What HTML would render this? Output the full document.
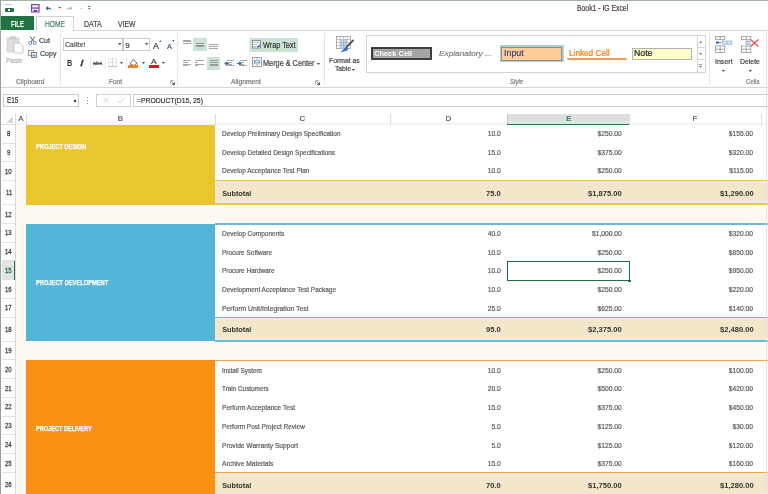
<!DOCTYPE html><html><head><meta charset="utf-8"><style>
html,body{margin:0;padding:0;}
body{width:768px;height:494px;overflow:hidden;position:relative;background:#fff;will-change:transform;font-family:"Liberation Sans", sans-serif;}
.t{position:absolute;white-space:nowrap;line-height:1;-webkit-text-stroke:0.2px currentColor;}
svg{position:absolute;}

</style></head><body>
<div style="position:absolute;left:0px;top:107px;width:768px;height:387px;background:#FEF9F3;"></div>
<div style="position:absolute;left:0px;top:112.5px;width:768px;height:12px;background:#fff;"></div>
<div style="position:absolute;left:0px;top:112.5px;width:15.5px;height:382px;background:#fff;"></div>
<div style="position:absolute;left:507px;top:113.5px;width:122px;height:7.5px;background:#DEDEDE;"></div>
<div style="position:absolute;left:507px;top:121px;width:122px;height:2.8px;background:#E8E4E4;"></div>
<div style="position:absolute;left:507px;top:113.5px;width:1.3px;height:10.5px;background:#C8C8C8;"></div>
<div style="position:absolute;left:507px;top:123.8px;width:122px;height:1.4px;background:#217346;"></div>
<div style="position:absolute;left:15.5px;top:120.5px;width:752.5px;height:4px;background:linear-gradient(#fff,#F1F1F1);"></div>
<div style="position:absolute;left:507px;top:113.5px;width:122px;height:7.5px;background:#DEDEDE;"></div>
<div style="position:absolute;left:507px;top:121px;width:122px;height:2.8px;background:#E8E4E4;"></div>
<div style="position:absolute;left:507px;top:113.5px;width:1.3px;height:10.5px;background:#C8C8C8;"></div>
<div style="position:absolute;left:507px;top:123.8px;width:122px;height:1.4px;background:#217346;"></div>
<div style="position:absolute;left:15.0px;top:114px;width:1px;height:10.5px;background:#DCDCDC;"></div>
<div style="position:absolute;left:25.5px;top:114px;width:1px;height:10.5px;background:#DCDCDC;"></div>
<div style="position:absolute;left:214.5px;top:114px;width:1px;height:10.5px;background:#DCDCDC;"></div>
<div style="position:absolute;left:389.5px;top:114px;width:1px;height:10.5px;background:#DCDCDC;"></div>
<div style="position:absolute;left:628.5px;top:114px;width:1px;height:10.5px;background:#DCDCDC;"></div>
<div style="position:absolute;left:760.5px;top:114px;width:1px;height:10.5px;background:#DCDCDC;"></div>
<div class="t" style="left:18.14px;top:115px;font-size:7.85px;color:#555;">A</div>
<div class="t" style="left:117.64px;top:115px;font-size:7.85px;color:#555;">B</div>
<div class="t" style="left:299.4px;top:115px;font-size:7.85px;color:#555;">C</div>
<div class="t" style="left:445.4px;top:115px;font-size:7.85px;color:#555;">D</div>
<div class="t" style="left:566.14px;top:115px;font-size:7.85px;color:#217346;">E</div>
<div class="t" style="left:692.38px;top:115px;font-size:7.85px;color:#555;">F</div>
<svg style="position:absolute;left:4px;top:115px;overflow:visible" width="10" height="9" viewBox="0 0 10 9"><path d="M9 1 L9 8 L2 8 Z" fill="#DADADA"/></svg>
<div style="position:absolute;left:1.5px;top:142.55px;width:14px;height:0.7px;background:#E2E2E2;"></div>
<div class="t" style="left:7.12px;top:130px;font-size:7.56px;color:#444;transform:scaleX(0.800);transform-origin:0 0;-webkit-text-stroke:0.3px currentColor;">8</div>
<div style="position:absolute;left:1.5px;top:161.3px;width:14px;height:0.7px;background:#E2E2E2;"></div>
<div class="t" style="left:7.12px;top:149px;font-size:7.56px;color:#444;transform:scaleX(0.800);transform-origin:0 0;-webkit-text-stroke:0.3px currentColor;">9</div>
<div style="position:absolute;left:1.5px;top:180.05px;width:14px;height:0.7px;background:#E2E2E2;"></div>
<div class="t" style="left:5.44px;top:168px;font-size:7.56px;color:#444;transform:scaleX(0.800);transform-origin:0 0;-webkit-text-stroke:0.3px currentColor;">10</div>
<div style="position:absolute;left:1.5px;top:204.05px;width:14px;height:0.7px;background:#E2E2E2;"></div>
<div class="t" style="left:5.66px;top:189px;font-size:7.56px;color:#444;transform:scaleX(0.800);transform-origin:0 0;-webkit-text-stroke:0.3px currentColor;">11</div>
<div style="position:absolute;left:1.5px;top:222.8px;width:14px;height:0.7px;background:#E2E2E2;"></div>
<div class="t" style="left:5.44px;top:211px;font-size:7.56px;color:#444;transform:scaleX(0.800);transform-origin:0 0;-webkit-text-stroke:0.3px currentColor;">12</div>
<div style="position:absolute;left:1.5px;top:241.55px;width:14px;height:0.7px;background:#E2E2E2;"></div>
<div class="t" style="left:5.44px;top:229px;font-size:7.56px;color:#444;transform:scaleX(0.800);transform-origin:0 0;-webkit-text-stroke:0.3px currentColor;">13</div>
<div style="position:absolute;left:1.5px;top:260.3px;width:14px;height:0.7px;background:#E2E2E2;"></div>
<div class="t" style="left:5.44px;top:248px;font-size:7.56px;color:#444;transform:scaleX(0.800);transform-origin:0 0;-webkit-text-stroke:0.3px currentColor;">14</div>
<div style="position:absolute;left:1.5px;top:279.05px;width:14px;height:0.7px;background:#E2E2E2;"></div>
<div style="position:absolute;left:1.5px;top:261.0px;width:13px;height:18.05px;background:#E4E4E4;"></div>
<div style="position:absolute;left:14.2px;top:261.0px;width:1.6px;height:18.75px;background:#217346;"></div>
<div class="t" style="left:5.44px;top:267px;font-size:7.56px;color:#217346;transform:scaleX(0.800);transform-origin:0 0;-webkit-text-stroke:0.3px currentColor;">15</div>
<div style="position:absolute;left:1.5px;top:297.8px;width:14px;height:0.7px;background:#E2E2E2;"></div>
<div class="t" style="left:5.44px;top:286px;font-size:7.56px;color:#444;transform:scaleX(0.800);transform-origin:0 0;-webkit-text-stroke:0.3px currentColor;">16</div>
<div style="position:absolute;left:1.5px;top:316.55px;width:14px;height:0.7px;background:#E2E2E2;"></div>
<div class="t" style="left:5.44px;top:304px;font-size:7.56px;color:#444;transform:scaleX(0.800);transform-origin:0 0;-webkit-text-stroke:0.3px currentColor;">17</div>
<div style="position:absolute;left:1.5px;top:340.55px;width:14px;height:0.7px;background:#E2E2E2;"></div>
<div class="t" style="left:5.44px;top:326px;font-size:7.56px;color:#444;transform:scaleX(0.800);transform-origin:0 0;-webkit-text-stroke:0.3px currentColor;">18</div>
<div style="position:absolute;left:1.5px;top:359.3px;width:14px;height:0.7px;background:#E2E2E2;"></div>
<div class="t" style="left:5.44px;top:347px;font-size:7.56px;color:#444;transform:scaleX(0.800);transform-origin:0 0;-webkit-text-stroke:0.3px currentColor;">19</div>
<div style="position:absolute;left:1.5px;top:378.05px;width:14px;height:0.7px;background:#E2E2E2;"></div>
<div class="t" style="left:5.44px;top:366px;font-size:7.56px;color:#444;transform:scaleX(0.800);transform-origin:0 0;-webkit-text-stroke:0.3px currentColor;">20</div>
<div style="position:absolute;left:1.5px;top:396.8px;width:14px;height:0.7px;background:#E2E2E2;"></div>
<div class="t" style="left:5.44px;top:385px;font-size:7.56px;color:#444;transform:scaleX(0.800);transform-origin:0 0;-webkit-text-stroke:0.3px currentColor;">21</div>
<div style="position:absolute;left:1.5px;top:415.55px;width:14px;height:0.7px;background:#E2E2E2;"></div>
<div class="t" style="left:5.44px;top:403px;font-size:7.56px;color:#444;transform:scaleX(0.800);transform-origin:0 0;-webkit-text-stroke:0.3px currentColor;">22</div>
<div style="position:absolute;left:1.5px;top:434.3px;width:14px;height:0.7px;background:#E2E2E2;"></div>
<div class="t" style="left:5.44px;top:422px;font-size:7.56px;color:#444;transform:scaleX(0.800);transform-origin:0 0;-webkit-text-stroke:0.3px currentColor;">23</div>
<div style="position:absolute;left:1.5px;top:453.05px;width:14px;height:0.7px;background:#E2E2E2;"></div>
<div class="t" style="left:5.44px;top:441px;font-size:7.56px;color:#444;transform:scaleX(0.800);transform-origin:0 0;-webkit-text-stroke:0.3px currentColor;">24</div>
<div style="position:absolute;left:1.5px;top:471.8px;width:14px;height:0.7px;background:#E2E2E2;"></div>
<div class="t" style="left:5.44px;top:460px;font-size:7.56px;color:#444;transform:scaleX(0.800);transform-origin:0 0;-webkit-text-stroke:0.3px currentColor;">25</div>
<div style="position:absolute;left:1.5px;top:495.8px;width:14px;height:0.7px;background:#E2E2E2;"></div>
<div class="t" style="left:5.44px;top:481px;font-size:7.56px;color:#444;transform:scaleX(0.800);transform-origin:0 0;-webkit-text-stroke:0.3px currentColor;">26</div>
<div style="position:absolute;left:15.1px;top:112.5px;width:0.7px;height:382px;background:#DADADA;"></div>
<div style="position:absolute;left:1.5px;top:124px;width:14px;height:0.7px;background:#DDDDDD;"></div>
<div style="position:absolute;left:26px;top:124.5px;width:189px;height:80.25px;background:#E8C72E;"></div>
<div class="t" style="left:35.5px;top:143px;font-size:6.98px;color:#fff;font-weight:bold;-webkit-text-stroke:0;transform:scaleX(0.817);transform-origin:0 0;-webkit-text-stroke:0.25px #fff;">PROJECT DESIGN</div>
<div style="position:absolute;left:215px;top:124.5px;width:553px;height:18.75px;background:#fff;"></div>
<div style="position:absolute;left:215px;top:143.25px;width:553px;height:18.75px;background:#fff;"></div>
<div style="position:absolute;left:215px;top:162.0px;width:553px;height:18.75px;background:#fff;"></div>
<div style="position:absolute;left:215px;top:180.75px;width:553px;height:24px;background:#F2E7C9;"></div>
<div style="position:absolute;left:215px;top:180.05px;width:553px;height:1.4px;background:#E9C544;"></div>
<div style="position:absolute;left:215px;top:181.45px;width:553px;height:1.6px;background:#F7E9DA;"></div>
<div style="position:absolute;left:215px;top:203.25px;width:553px;height:1.9px;background:#E9C544;"></div>
<div style="position:absolute;left:215px;top:201.45px;width:553px;height:1.8px;background:#EFEBDD;"></div>
<div style="position:absolute;left:26px;top:223.5px;width:189px;height:117.75px;background:#54B5D7;"></div>
<div class="t" style="left:35.5px;top:279px;font-size:6.98px;color:#fff;font-weight:bold;-webkit-text-stroke:0;transform:scaleX(0.822);transform-origin:0 0;-webkit-text-stroke:0.25px #fff;">PROJECT DEVELOPMENT</div>
<div style="position:absolute;left:215px;top:223.5px;width:553px;height:18.75px;background:#fff;"></div>
<div style="position:absolute;left:215px;top:242.25px;width:553px;height:18.75px;background:#fff;"></div>
<div style="position:absolute;left:215px;top:261.0px;width:553px;height:18.75px;background:#fff;"></div>
<div style="position:absolute;left:215px;top:279.75px;width:553px;height:18.75px;background:#fff;"></div>
<div style="position:absolute;left:215px;top:298.5px;width:553px;height:18.75px;background:#fff;"></div>
<div style="position:absolute;left:215px;top:317.25px;width:553px;height:24px;background:#F2E7C9;"></div>
<div style="position:absolute;left:215px;top:223.4px;width:553px;height:1.5px;background:#64BDDB;"></div>
<div style="position:absolute;left:215px;top:316.55px;width:553px;height:1.4px;background:#64BDDB;"></div>
<div style="position:absolute;left:215px;top:317.95px;width:553px;height:1.6px;background:#F7E9DA;"></div>
<div style="position:absolute;left:215px;top:339.75px;width:553px;height:1.9px;background:#64BDDB;"></div>
<div style="position:absolute;left:215px;top:337.95px;width:553px;height:1.8px;background:#EFEBDD;"></div>
<div style="position:absolute;left:26px;top:360.0px;width:189px;height:136.5px;background:#F99115;"></div>
<div class="t" style="left:35.5px;top:425px;font-size:6.98px;color:#fff;font-weight:bold;-webkit-text-stroke:0;transform:scaleX(0.801);transform-origin:0 0;-webkit-text-stroke:0.25px #fff;">PROJECT DELIVERY</div>
<div style="position:absolute;left:215px;top:360.0px;width:553px;height:18.75px;background:#fff;"></div>
<div style="position:absolute;left:215px;top:378.75px;width:553px;height:18.75px;background:#fff;"></div>
<div style="position:absolute;left:215px;top:397.5px;width:553px;height:18.75px;background:#fff;"></div>
<div style="position:absolute;left:215px;top:416.25px;width:553px;height:18.75px;background:#fff;"></div>
<div style="position:absolute;left:215px;top:435.0px;width:553px;height:18.75px;background:#fff;"></div>
<div style="position:absolute;left:215px;top:453.75px;width:553px;height:18.75px;background:#fff;"></div>
<div style="position:absolute;left:215px;top:472.5px;width:553px;height:24px;background:#F2E7C9;"></div>
<div style="position:absolute;left:215px;top:359.9px;width:553px;height:1.5px;background:#F7A347;"></div>
<div style="position:absolute;left:215px;top:471.8px;width:553px;height:1.4px;background:#F7A347;"></div>
<div style="position:absolute;left:215px;top:473.2px;width:553px;height:1.6px;background:#F7E9DA;"></div>
<div style="position:absolute;left:215px;top:495.0px;width:553px;height:1.9px;background:#F7A347;"></div>
<div style="position:absolute;left:215px;top:493.2px;width:553px;height:1.8px;background:#EFEBDD;"></div>
<div class="t" style="left:222.1px;top:131px;font-size:6.69px;color:#5C5C5C;transform:scaleX(0.969);transform-origin:0 0;">Develop Preliminary Design Specification</div>
<div class="t" style="left:487.68px;top:131px;font-size:6.69px;color:#5C5C5C;">10.0</div>
<div class="t" style="left:597.52px;top:131px;font-size:6.69px;color:#5C5C5C;">$250.00</div>
<div class="t" style="left:728.82px;top:131px;font-size:6.69px;color:#5C5C5C;">$155.00</div>
<div class="t" style="left:222.1px;top:150px;font-size:6.69px;color:#5C5C5C;transform:scaleX(0.969);transform-origin:0 0;">Develop Detailed Design Specifications</div>
<div class="t" style="left:487.68px;top:150px;font-size:6.69px;color:#5C5C5C;">15.0</div>
<div class="t" style="left:597.52px;top:150px;font-size:6.69px;color:#5C5C5C;">$375.00</div>
<div class="t" style="left:728.82px;top:150px;font-size:6.69px;color:#5C5C5C;">$320.00</div>
<div class="t" style="left:222.1px;top:168px;font-size:6.69px;color:#5C5C5C;transform:scaleX(0.969);transform-origin:0 0;">Develop Acceptance Test Plan</div>
<div class="t" style="left:487.68px;top:168px;font-size:6.69px;color:#5C5C5C;">10.0</div>
<div class="t" style="left:597.52px;top:168px;font-size:6.69px;color:#5C5C5C;">$250.00</div>
<div class="t" style="left:729.32px;top:168px;font-size:6.69px;color:#5C5C5C;">$115.00</div>
<div class="t" style="left:222.2px;top:190px;font-size:7.27px;color:#333;font-weight:bold;-webkit-text-stroke:0;">Subtotal</div>
<div class="t" style="left:485.99px;top:190px;font-size:7.27px;color:#333;font-weight:bold;-webkit-text-stroke:0;transform:scaleX(1.040);transform-origin:0 0;">75.0</div>
<div class="t" style="left:587.88px;top:190px;font-size:7.27px;color:#333;font-weight:bold;-webkit-text-stroke:0;transform:scaleX(1.040);transform-origin:0 0;">$1,875.00</div>
<div class="t" style="left:719.58px;top:190px;font-size:7.27px;color:#333;font-weight:bold;-webkit-text-stroke:0;transform:scaleX(1.040);transform-origin:0 0;">$1,290.00</div>
<div class="t" style="left:222.1px;top:231px;font-size:6.69px;color:#5C5C5C;transform:scaleX(0.969);transform-origin:0 0;">Develop Components</div>
<div class="t" style="left:487.68px;top:231px;font-size:6.69px;color:#5C5C5C;">40.0</div>
<div class="t" style="left:591.94px;top:231px;font-size:6.69px;color:#5C5C5C;">$1,000.00</div>
<div class="t" style="left:728.82px;top:231px;font-size:6.69px;color:#5C5C5C;">$320.00</div>
<div class="t" style="left:222.1px;top:250px;font-size:6.69px;color:#5C5C5C;transform:scaleX(0.969);transform-origin:0 0;">Procure Software</div>
<div class="t" style="left:487.68px;top:250px;font-size:6.69px;color:#5C5C5C;">10.0</div>
<div class="t" style="left:597.52px;top:250px;font-size:6.69px;color:#5C5C5C;">$250.00</div>
<div class="t" style="left:728.82px;top:250px;font-size:6.69px;color:#5C5C5C;">$850.00</div>
<div class="t" style="left:222.1px;top:268px;font-size:6.69px;color:#5C5C5C;transform:scaleX(0.969);transform-origin:0 0;">Procure Hardware</div>
<div class="t" style="left:487.68px;top:268px;font-size:6.69px;color:#5C5C5C;">10.0</div>
<div class="t" style="left:597.52px;top:268px;font-size:6.69px;color:#5C5C5C;">$250.00</div>
<div class="t" style="left:728.82px;top:268px;font-size:6.69px;color:#5C5C5C;">$950.00</div>
<div class="t" style="left:222.1px;top:287px;font-size:6.69px;color:#5C5C5C;transform:scaleX(0.969);transform-origin:0 0;">Development Acceptance Test Package</div>
<div class="t" style="left:487.68px;top:287px;font-size:6.69px;color:#5C5C5C;">10.0</div>
<div class="t" style="left:597.52px;top:287px;font-size:6.69px;color:#5C5C5C;">$250.00</div>
<div class="t" style="left:728.82px;top:287px;font-size:6.69px;color:#5C5C5C;">$220.00</div>
<div class="t" style="left:222.1px;top:306px;font-size:6.69px;color:#5C5C5C;transform:scaleX(1.018);transform-origin:0 0;">Perform Unit/Integration Test</div>
<div class="t" style="left:487.68px;top:306px;font-size:6.69px;color:#5C5C5C;">25.0</div>
<div class="t" style="left:597.52px;top:306px;font-size:6.69px;color:#5C5C5C;">$625.00</div>
<div class="t" style="left:728.82px;top:306px;font-size:6.69px;color:#5C5C5C;">$140.00</div>
<div class="t" style="left:222.2px;top:326px;font-size:7.27px;color:#333;font-weight:bold;-webkit-text-stroke:0;">Subtotal</div>
<div class="t" style="left:485.99px;top:326px;font-size:7.27px;color:#333;font-weight:bold;-webkit-text-stroke:0;transform:scaleX(1.040);transform-origin:0 0;">95.0</div>
<div class="t" style="left:587.88px;top:326px;font-size:7.27px;color:#333;font-weight:bold;-webkit-text-stroke:0;transform:scaleX(1.040);transform-origin:0 0;">$2,375.00</div>
<div class="t" style="left:719.58px;top:326px;font-size:7.27px;color:#333;font-weight:bold;-webkit-text-stroke:0;transform:scaleX(1.040);transform-origin:0 0;">$2,480.00</div>
<div class="t" style="left:222.1px;top:368px;font-size:6.69px;color:#5C5C5C;transform:scaleX(0.960);transform-origin:0 0;">Install System</div>
<div class="t" style="left:487.68px;top:368px;font-size:6.69px;color:#5C5C5C;">10.0</div>
<div class="t" style="left:597.52px;top:368px;font-size:6.69px;color:#5C5C5C;">$250.00</div>
<div class="t" style="left:728.82px;top:368px;font-size:6.69px;color:#5C5C5C;">$100.00</div>
<div class="t" style="left:222.1px;top:386px;font-size:6.69px;color:#5C5C5C;transform:scaleX(0.950);transform-origin:0 0;">Train Customers</div>
<div class="t" style="left:487.68px;top:386px;font-size:6.69px;color:#5C5C5C;">20.0</div>
<div class="t" style="left:597.52px;top:386px;font-size:6.69px;color:#5C5C5C;">$500.00</div>
<div class="t" style="left:728.82px;top:386px;font-size:6.69px;color:#5C5C5C;">$420.00</div>
<div class="t" style="left:222.1px;top:405px;font-size:6.69px;color:#5C5C5C;transform:scaleX(0.984);transform-origin:0 0;">Perform Acceptance Test</div>
<div class="t" style="left:487.68px;top:405px;font-size:6.69px;color:#5C5C5C;">15.0</div>
<div class="t" style="left:597.52px;top:405px;font-size:6.69px;color:#5C5C5C;">$375.00</div>
<div class="t" style="left:728.82px;top:405px;font-size:6.69px;color:#5C5C5C;">$450.00</div>
<div class="t" style="left:222.1px;top:424px;font-size:6.69px;color:#5C5C5C;transform:scaleX(0.969);transform-origin:0 0;">Perform Post Project Review</div>
<div class="t" style="left:491.4px;top:424px;font-size:6.69px;color:#5C5C5C;">5.0</div>
<div class="t" style="left:597.52px;top:424px;font-size:6.69px;color:#5C5C5C;">$125.00</div>
<div class="t" style="left:732.54px;top:424px;font-size:6.69px;color:#5C5C5C;">$30.00</div>
<div class="t" style="left:222.1px;top:443px;font-size:6.69px;color:#5C5C5C;transform:scaleX(0.993);transform-origin:0 0;">Provide Warranty Support</div>
<div class="t" style="left:491.4px;top:443px;font-size:6.69px;color:#5C5C5C;">5.0</div>
<div class="t" style="left:597.52px;top:443px;font-size:6.69px;color:#5C5C5C;">$125.00</div>
<div class="t" style="left:728.82px;top:443px;font-size:6.69px;color:#5C5C5C;">$120.00</div>
<div class="t" style="left:222.1px;top:461px;font-size:6.69px;color:#5C5C5C;">Archive Materials</div>
<div class="t" style="left:487.68px;top:461px;font-size:6.69px;color:#5C5C5C;">15.0</div>
<div class="t" style="left:597.52px;top:461px;font-size:6.69px;color:#5C5C5C;">$375.00</div>
<div class="t" style="left:728.82px;top:461px;font-size:6.69px;color:#5C5C5C;">$160.00</div>
<div class="t" style="left:222.2px;top:482px;font-size:7.27px;color:#333;font-weight:bold;-webkit-text-stroke:0;">Subtotal</div>
<div class="t" style="left:485.99px;top:482px;font-size:7.27px;color:#333;font-weight:bold;-webkit-text-stroke:0;transform:scaleX(1.040);transform-origin:0 0;">70.0</div>
<div class="t" style="left:587.88px;top:482px;font-size:7.27px;color:#333;font-weight:bold;-webkit-text-stroke:0;transform:scaleX(1.040);transform-origin:0 0;">$1,750.00</div>
<div class="t" style="left:719.58px;top:482px;font-size:7.27px;color:#333;font-weight:bold;-webkit-text-stroke:0;transform:scaleX(1.040);transform-origin:0 0;">$1,280.00</div>
<div style="position:absolute;left:506.7px;top:260.8px;width:123px;height:20px;box-sizing:border-box;border:1.4px solid #1F6E44;"></div>
<div style="position:absolute;left:628.3px;top:279.5px;width:2.9px;height:2.9px;background:#1F6E44;"></div>
<div style="position:absolute;left:0px;top:88px;width:768px;height:24.5px;background:#fff;"></div>
<div style="position:absolute;left:3.2px;top:93.6px;width:76px;height:13.1px;box-sizing:border-box;border:1.2px solid #CBCBCB;background:#fff;"></div>
<div class="t" style="left:7.3px;top:96px;font-size:8.43px;color:#333;transform:scaleX(0.760);transform-origin:0 0;">E15</div>
<svg style="position:absolute;left:72.5px;top:98.5px;overflow:visible" width="4" height="4" viewBox="0 0 4 4"><circle cx="2" cy="2" r="1.2" fill="#444"/></svg>
<div style="position:absolute;left:86.7px;top:96.5px;width:0.9px;height:0.9px;background:#999;"></div>
<div style="position:absolute;left:86.7px;top:99.5px;width:0.9px;height:0.9px;background:#999;"></div>
<div style="position:absolute;left:86.7px;top:102.5px;width:0.9px;height:0.9px;background:#999;"></div>
<div style="position:absolute;left:96px;top:93.7px;width:34.5px;height:13.1px;box-sizing:border-box;border:1px solid #D0D0D0;background:#fff;"></div>
<svg style="position:absolute;left:102px;top:97px;overflow:visible" width="8" height="7" viewBox="0 0 8 7"><path d="M1.5 1 L6.5 6 M6.5 1 L1.5 6" stroke="#D2D2D2" stroke-width="0.9"/></svg>
<svg style="position:absolute;left:117px;top:97px;overflow:visible" width="8" height="7" viewBox="0 0 8 7"><path d="M1 4 L3 6 L7 1" stroke="#D2D2D2" stroke-width="0.9" fill="none"/></svg>
<div style="position:absolute;left:133.3px;top:93.8px;width:640px;height:12.8px;box-sizing:border-box;border:1.2px solid #CBCBCB;background:#fff;"></div>
<div class="t" style="left:137px;top:97px;font-size:7.7px;color:#333;transform:scaleX(0.884);transform-origin:0 0;">=PRODUCT(D15, 25)</div>
<div style="position:absolute;left:0px;top:30px;width:768px;height:58px;background:#fff;"></div>
<div style="position:absolute;left:0px;top:86.8px;width:768px;height:1.2px;background:#D5D5D5;"></div>
<div style="position:absolute;left:60px;top:33px;width:0.8px;height:52px;background:#E6E6E6;"></div>
<div style="position:absolute;left:177.3px;top:33px;width:0.8px;height:52px;background:#E6E6E6;"></div>
<div style="position:absolute;left:323.5px;top:33px;width:0.8px;height:52px;background:#E6E6E6;"></div>
<div style="position:absolute;left:708.5px;top:33px;width:0.8px;height:52px;background:#E6E6E6;"></div>
<svg style="position:absolute;left:6px;top:35px;overflow:visible" width="18" height="19" viewBox="0 0 18 19"><rect x="1" y="3" width="12" height="14" fill="#DEDEDE" stroke="#CFCFCF" stroke-width="0.7"/>
<rect x="4" y="1.2" width="6" height="3.2" fill="#CDCDCD"/>
<path d="M8 8 H14 L17 11 V18 H8 Z" fill="#fff" stroke="#C4C4C4" stroke-width="0.9"/></svg>
<div class="t" style="left:5.8px;top:57px;font-size:7.85px;color:#B0B0B0;transform:scaleX(0.832);transform-origin:0 0;">Paste</div>
<svg style="position:absolute;left:28px;top:36px;overflow:visible" width="9" height="9" viewBox="0 0 9 9"><path d="M2 0.5 L6.2 6 M7 0.5 L2.8 6" stroke="#444" stroke-width="0.9" fill="none"/>
<circle cx="2.2" cy="7" r="1.5" fill="none" stroke="#4F8AC9" stroke-width="0.9"/>
<circle cx="6.8" cy="7" r="1.5" fill="none" stroke="#4F8AC9" stroke-width="0.9"/></svg>
<div class="t" style="left:39px;top:37px;font-size:7.56px;color:#444;transform:scaleX(0.935);transform-origin:0 0;">Cut</div>
<svg style="position:absolute;left:28px;top:50px;overflow:visible" width="9" height="8" viewBox="0 0 9 8"><rect x="0.5" y="0.5" width="5" height="5" fill="#fff" stroke="#888" stroke-width="0.8"/>
<rect x="3.5" y="2.5" width="5" height="5" fill="#fff" stroke="#666" stroke-width="0.8"/>
<rect x="4.5" y="4.5" width="3" height="2" fill="#5B9BD5"/></svg>
<div class="t" style="left:39.5px;top:50px;font-size:7.56px;color:#444;transform:scaleX(0.935);transform-origin:0 0;">Copy</div>
<div class="t" style="left:15.8px;top:78px;font-size:7.27px;color:#777;transform:scaleX(0.916);transform-origin:0 0;">Clipboard</div>
<div style="position:absolute;left:62.8px;top:38px;width:60px;height:12.8px;box-sizing:border-box;border:1.2px solid #CFCFCF;background:#fff;"></div>
<div class="t" style="left:65px;top:41px;font-size:7.85px;color:#555;transform:scaleX(0.899);transform-origin:0 0;">Calibri</div>
<svg style="position:absolute;left:117.5px;top:43px;overflow:visible" width="4" height="3" viewBox="0 0 4 3"><path d="M0 0 H3.5 L1.75 2.2 Z" fill="#555"/></svg>
<div style="position:absolute;left:122.5px;top:38px;width:27.5px;height:12.8px;box-sizing:border-box;border:1.2px solid #CFCFCF;border-left:1.5px solid #C0C0C0;background:#fff;"></div>
<div class="t" style="left:125.2px;top:42px;font-size:7.85px;color:#444;">9</div>
<svg style="position:absolute;left:144.5px;top:43px;overflow:visible" width="4" height="3" viewBox="0 0 4 3"><path d="M0 0 H3.5 L1.75 2.2 Z" fill="#555"/></svg>
<div class="t" style="left:153.2px;top:43px;font-size:8.14px;color:#444;transform:scaleX(1.105);transform-origin:0 0;">A</div>
<svg style="position:absolute;left:158.8px;top:40.2px;overflow:visible" width="3" height="3" viewBox="0 0 3 3"><path d="M0 2 L1.3 0 L2.6 2 Z" fill="#3C82C4"/></svg>
<div class="t" style="left:166.5px;top:44px;font-size:6.69px;color:#555;transform:scaleX(1.120);transform-origin:0 0;">A</div>
<svg style="position:absolute;left:171.8px;top:40.2px;overflow:visible" width="3" height="3" viewBox="0 0 3 3"><path d="M0 0 L2.6 0 L1.3 2 Z" fill="#3C82C4"/></svg>
<div class="t" style="left:67px;top:59px;font-size:8.72px;color:#333;font-weight:bold;-webkit-text-stroke:0;transform:scaleX(0.826);transform-origin:0 0;">B</div>
<div class="t" style="left:80.2px;top:59px;font-size:8.72px;color:#333;font-style:italic;transform:scaleX(1.486);transform-origin:0 0;-webkit-text-stroke:0.35px #333;">I</div>
<div style="position:absolute;left:89.7px;top:57px;width:0.6px;height:12px;background:#EBEBEB;"></div>
<div class="t" style="left:92.8px;top:61px;font-size:5.52px;color:#444;font-weight:bold;-webkit-text-stroke:0;transform:scaleX(0.978);transform-origin:0 0;">abc</div>
<div style="position:absolute;left:92.8px;top:63.3px;width:9.3px;height:0.7px;background:#555;"></div>
<div style="position:absolute;left:105.3px;top:57px;width:0.6px;height:12px;background:#EBEBEB;"></div>
<svg style="position:absolute;left:108px;top:58px;overflow:visible" width="9" height="9" viewBox="0 0 9 9"><rect x="0.5" y="0.5" width="8" height="8" fill="none" stroke="#D0D0D0" stroke-width="0.8" stroke-dasharray="1 0.6"/>
<path d="M4.5 0.5 V8.5 M0.5 4.5 H8.5" stroke="#D0D0D0" stroke-width="0.7"/>
<path d="M0.2 8.6 H8.8" stroke="#B8B8B8" stroke-width="0.9"/></svg>
<svg style="position:absolute;left:119.8px;top:62px;overflow:visible" width="3" height="2" viewBox="0 0 3 2"><path d="M-0.3 0 H3.1 L1.4 1.9 Z" fill="#555"/></svg>
<div style="position:absolute;left:125.5px;top:57px;width:0.6px;height:12px;background:#EBEBEB;"></div>
<svg style="position:absolute;left:128px;top:57.5px;overflow:visible" width="11" height="8" viewBox="0 0 11 8"><path d="M2 6 L5 1.5 L9 5 L6 7.5 Z" fill="#fff" stroke="#666" stroke-width="0.9"/>
<path d="M9 4.8 L9.8 7 L9 7.6 Z" fill="#3C6FB4"/></svg>
<div style="position:absolute;left:128.3px;top:65.2px;width:9.8px;height:2.4px;background:#F07F1D;border-radius:0.5px;"></div>
<svg style="position:absolute;left:141.5px;top:62px;overflow:visible" width="3" height="2" viewBox="0 0 3 2"><path d="M-0.3 0 H3.1 L1.4 1.9 Z" fill="#555"/></svg>
<div class="t" style="left:151.2px;top:58px;font-size:7.56px;color:#444;transform:scaleX(1.111);transform-origin:0 0;">A</div>
<div style="position:absolute;left:148.5px;top:65.2px;width:10px;height:2.4px;background:#E8101A;border-radius:0.5px;"></div>
<svg style="position:absolute;left:162px;top:62px;overflow:visible" width="3" height="2" viewBox="0 0 3 2"><path d="M-0.3 0 H3.1 L1.4 1.9 Z" fill="#555"/></svg>
<div class="t" style="left:108.9px;top:78px;font-size:6.98px;color:#777;transform:scaleX(0.931);transform-origin:0 0;">Font</div>
<svg style="position:absolute;left:169.5px;top:79.5px;overflow:visible" width="5" height="5" viewBox="0 0 5 5"><path d="M0.5 4.2 V0.5 H4.2" stroke="#999" stroke-width="0.7" fill="none"/><path d="M1.5 1.5 L4.5 4.5 M4.6 2.4 V4.6 H2.4 Z" stroke="#555" stroke-width="0.8" fill="#555"/></svg>
<div style="position:absolute;left:193px;top:37.8px;width:13.6px;height:13.1px;background:#CBE3D5;"></div>
<div style="position:absolute;left:182.7px;top:39.5px;width:8.4px;height:0.8px;background:#A8A8A8;"></div>
<div style="position:absolute;left:182.7px;top:41.2px;width:8.4px;height:0.8px;background:#A8A8A8;"></div>
<div style="position:absolute;left:182.7px;top:42.9px;width:8.4px;height:0.8px;background:#A8A8A8;"></div>
<div style="position:absolute;left:196px;top:42.9px;width:7.8px;height:0.8px;background:#9A9A9A;"></div>
<div style="position:absolute;left:196px;top:44.6px;width:7.8px;height:0.8px;background:#9A9A9A;"></div>
<div style="position:absolute;left:196px;top:46.3px;width:7.8px;height:0.8px;background:#9A9A9A;"></div>
<div style="position:absolute;left:208.8px;top:44.2px;width:9px;height:0.8px;background:#A8A8A8;"></div>
<div style="position:absolute;left:208.8px;top:45.9px;width:9px;height:0.8px;background:#A8A8A8;"></div>
<div style="position:absolute;left:208.8px;top:47.6px;width:9px;height:0.8px;background:#A8A8A8;"></div>
<div style="position:absolute;left:206.6px;top:56.5px;width:13.6px;height:13.1px;background:#CBE3D5;"></div>
<div style="position:absolute;left:182.7px;top:60.0px;width:8.3px;height:0.8px;background:#A8A8A8;"></div>
<div style="position:absolute;left:182.7px;top:61.8px;width:5.5px;height:0.8px;background:#A8A8A8;"></div>
<div style="position:absolute;left:182.7px;top:63.6px;width:8.3px;height:0.8px;background:#A8A8A8;"></div>
<div style="position:absolute;left:182.7px;top:65.4px;width:5.5px;height:0.8px;background:#A8A8A8;"></div>
<div style="position:absolute;left:195.2px;top:60.0px;width:8.8px;height:0.8px;background:#A8A8A8;"></div>
<div style="position:absolute;left:195.2px;top:61.8px;width:5.8px;height:0.8px;background:#A8A8A8;"></div>
<div style="position:absolute;left:195.2px;top:63.6px;width:8.8px;height:0.8px;background:#A8A8A8;"></div>
<div style="position:absolute;left:195.2px;top:65.4px;width:5.8px;height:0.8px;background:#A8A8A8;"></div>
<div style="position:absolute;left:197.7px;top:61.8px;width:3.8px;height:0.8px;background:#fff;"></div>
<div style="position:absolute;left:197.7px;top:65.4px;width:3.8px;height:0.8px;background:#fff;"></div>
<div style="position:absolute;left:209.5px;top:60.0px;width:8px;height:0.8px;background:#999;"></div>
<div style="position:absolute;left:209.5px;top:61.8px;width:8px;height:0.8px;background:#999;"></div>
<div style="position:absolute;left:209.5px;top:63.6px;width:8px;height:0.8px;background:#999;"></div>
<div style="position:absolute;left:209.5px;top:65.4px;width:8px;height:0.8px;background:#999;"></div>
<div style="position:absolute;left:227px;top:60.0px;width:7px;height:0.8px;background:#A8A8A8;"></div>
<div style="position:absolute;left:227px;top:61.8px;width:4.5px;height:0.8px;background:#A8A8A8;"></div>
<div style="position:absolute;left:227px;top:63.6px;width:4.5px;height:0.8px;background:#A8A8A8;"></div>
<div style="position:absolute;left:227px;top:65.4px;width:7px;height:0.8px;background:#A8A8A8;"></div>
<div style="position:absolute;left:239.8px;top:60.0px;width:7px;height:0.8px;background:#A8A8A8;"></div>
<div style="position:absolute;left:239.8px;top:61.8px;width:4.5px;height:0.8px;background:#A8A8A8;"></div>
<div style="position:absolute;left:239.8px;top:63.6px;width:4.5px;height:0.8px;background:#A8A8A8;"></div>
<div style="position:absolute;left:239.8px;top:65.4px;width:7px;height:0.8px;background:#A8A8A8;"></div>
<svg style="position:absolute;left:224px;top:60.5px;overflow:visible" width="5" height="5" viewBox="0 0 5 5"><path d="M0.2 2.5 L3 0.3 V4.7 Z" fill="#2E6BBF"/><rect x="2.5" y="2" width="2.5" height="1" fill="#2E6BBF"/></svg>
<svg style="position:absolute;left:236.8px;top:60.5px;overflow:visible" width="5" height="5" viewBox="0 0 5 5"><path d="M4.8 2.5 L2 0.3 V4.7 Z" fill="#2E6BBF"/><rect x="0" y="2" width="2.5" height="1" fill="#2E6BBF"/></svg>
<div style="position:absolute;left:249.2px;top:36px;width:0.6px;height:36px;background:#EBEBEB;"></div>
<div style="position:absolute;left:250px;top:38px;width:48.1px;height:13.6px;background:#CBE3D5;"></div>
<svg style="position:absolute;left:251.7px;top:40px;overflow:visible" width="10" height="9" viewBox="0 0 10 9"><rect x="0.5" y="0.5" width="8" height="7.5" fill="#fff" stroke="#777" stroke-width="0.8"/>
<path d="M1.5 2.5 H7.5 M1.5 4.5 H5 M1.5 6.5 H4" stroke="#999" stroke-width="0.7"/>
<path d="M5 6.5 H7.8 V4 M6.5 5.5 L5 6.5 L6.5 7.5" stroke="#2E6BBF" stroke-width="0.9" fill="none"/></svg>
<div class="t" style="left:262.8px;top:41px;font-size:8.72px;color:#333;transform:scaleX(0.835);transform-origin:0 0;">Wrap Text</div>
<svg style="position:absolute;left:251.7px;top:57px;overflow:visible" width="10" height="10" viewBox="0 0 10 10"><rect x="0.5" y="0.5" width="9" height="9" fill="#fff" stroke="#8A8A8A" stroke-width="0.8"/>
<path d="M0.5 3.2 H9.5 M0.5 6.8 H9.5 M5 0.5 V3.2 M5 6.8 V9.5" stroke="#9A9A9A" stroke-width="0.7"/>
<path d="M2 5 H8 M2 5 L3.2 4 M2 5 L3.2 6 M8 5 L6.8 4 M8 5 L6.8 6" stroke="#2E6BBF" stroke-width="0.7" fill="none"/></svg>
<div class="t" style="left:263px;top:59px;font-size:8.72px;color:#444;transform:scaleX(0.837);transform-origin:0 0;">Merge &amp; Center</div>
<svg style="position:absolute;left:316.5px;top:62.5px;overflow:visible" width="3" height="2" viewBox="0 0 3 2"><path d="M-0.3 0 H3.1 L1.4 1.9 Z" fill="#555"/></svg>
<div class="t" style="left:231px;top:78px;font-size:7.27px;color:#777;transform:scaleX(0.928);transform-origin:0 0;">Alignment</div>
<svg style="position:absolute;left:315.2px;top:79.5px;overflow:visible" width="5" height="5" viewBox="0 0 5 5"><path d="M0.5 4.2 V0.5 H4.2" stroke="#999" stroke-width="0.7" fill="none"/><path d="M1.5 1.5 L4.5 4.5 M4.6 2.4 V4.6 H2.4 Z" stroke="#555" stroke-width="0.8" fill="#555"/></svg>
<svg style="position:absolute;left:335.5px;top:36px;overflow:visible" width="18" height="17" viewBox="0 0 18 17"><rect x="0.5" y="0.5" width="14" height="12" fill="#fff" stroke="#999" stroke-width="0.8"/>
<rect x="4" y="3.5" width="7" height="9" fill="#BCD5EE"/>
<path d="M0.5 3.5 H14.5 M0.5 6.5 H14.5 M0.5 9.5 H14.5 M4 0.5 V12.5 M7.5 0.5 V12.5 M11 0.5 V12.5" stroke="#A8A8A8" stroke-width="0.6"/>
<path d="M17 4.5 L11 10.5" stroke="#555" stroke-width="1.8" stroke-linecap="round"/>
<path d="M10.5 10 L4.5 16.5 L11.5 14.5 L12 11.5 Z" fill="#2F75C0"/></svg>
<div class="t" style="left:329.3px;top:57px;font-size:7.27px;color:#444;transform:scaleX(0.938);transform-origin:0 0;">Format as</div>
<div class="t" style="left:334.7px;top:65px;font-size:7.27px;color:#444;transform:scaleX(0.921);transform-origin:0 0;">Table</div>
<svg style="position:absolute;left:352px;top:69.3px;overflow:visible" width="3" height="2" viewBox="0 0 3 2"><path d="M-0.3 0 H3.1 L1.4 1.9 Z" fill="#555"/></svg>
<div style="position:absolute;left:366px;top:35px;width:340px;height:37.9px;box-sizing:border-box;border:1px solid #D4D4D4;background:#fff;"></div>
<div style="position:absolute;left:696.6px;top:35px;width:1px;height:37.9px;background:#D4D4D4;"></div>
<div style="position:absolute;left:696.6px;top:47px;width:9.6px;height:0.9px;background:#D8D8D8;"></div>
<div style="position:absolute;left:696.6px;top:59.3px;width:9.6px;height:0.9px;background:#D8D8D8;"></div>
<svg style="position:absolute;left:699px;top:41px;overflow:visible" width="4" height="3" viewBox="0 0 4 3"><path d="M0 2 L1.6 0 L3.2 2 Z" fill="#777"/></svg>
<svg style="position:absolute;left:699px;top:52.5px;overflow:visible" width="4" height="3" viewBox="0 0 4 3"><path d="M0 0 L3.2 0 L1.6 2 Z" fill="#777"/></svg>
<svg style="position:absolute;left:699px;top:64px;overflow:visible" width="4" height="5" viewBox="0 0 4 5"><path d="M0 0.5 H3.2" stroke="#777" stroke-width="0.7"/><path d="M0 2 L3.2 2 L1.6 4 Z" fill="#777"/></svg>
<div style="position:absolute;left:371.1px;top:46.8px;width:60.6px;height:13.3px;box-sizing:border-box;border:2px solid #3F3F3F;background:#A5A5A5;"></div>
<div class="t" style="left:373.9px;top:50px;font-size:7.85px;color:#fff;font-weight:bold;-webkit-text-stroke:0;transform:scaleX(0.952);transform-origin:0 0;">Check Cell</div>
<div class="t" style="left:438.8px;top:50px;font-size:7.85px;color:#7F7F7F;font-style:italic;transform:scaleX(1.056);transform-origin:0 0;">Explanatory ...</div>
<div style="position:absolute;left:499.7px;top:45.3px;width:63.9px;height:16.8px;background:#A8D3C6;"></div>
<div style="position:absolute;left:501px;top:46.7px;width:61.3px;height:14px;box-sizing:border-box;border:1px solid #8E8E8E;background:#FFCC99;"></div>
<div class="t" style="left:503.9px;top:49px;font-size:8.43px;color:#3F3F76;transform:scaleX(1.056);transform-origin:0 0;">Input</div>
<div class="t" style="left:568.7px;top:49px;font-size:9.16px;color:#FA7D00;transform:scaleX(0.896);transform-origin:0 0;">Linked Cell</div>
<div style="position:absolute;left:566.6px;top:58.3px;width:60px;height:2.0px;background:#F99A48;border-radius:1px;"></div>
<div style="position:absolute;left:631.8px;top:47.7px;width:60.3px;height:12.5px;box-sizing:border-box;border:1px solid #B2B2B2;background:#FFFFCC;"></div>
<div class="t" style="left:634.4px;top:50px;font-size:8.14px;color:#222;transform:scaleX(1.076);transform-origin:0 0;">Note</div>
<div class="t" style="left:510px;top:78px;font-size:7.27px;color:#777;font-style:italic;transform:scaleX(0.804);transform-origin:0 0;">Style</div>
<svg style="position:absolute;left:715px;top:36px;overflow:visible" width="18" height="17" viewBox="0 0 18 17"><rect x="0.6" y="0.5" width="9.2" height="2.8" fill="#fff" stroke="#888" stroke-width="0.7"/><path d="M5.199999999999999 0.5 V3.3" stroke="#888" stroke-width="0.7"/><rect x="7.6" y="5.0" width="9.2" height="3.2" fill="#DCE6F2" stroke="#8FA9CC" stroke-width="0.7"/><path d="M12.2 5.0 V8.2" stroke="#8FA9CC" stroke-width="0.7"/><circle cx="2.2" cy="6.6" r="1.3" fill="#2E6BBF"/><rect x="3" y="6.1" width="3" height="1" fill="#2E6BBF"/><rect x="0.6" y="10" width="9.2" height="6.4" fill="#fff" stroke="#888" stroke-width="0.7"/><path d="M5.199999999999999 10 V16.4" stroke="#888" stroke-width="0.7"/><path d="M0.6 13.2 H9.799999999999999" stroke="#888" stroke-width="0.7"/></svg>
<div class="t" style="left:715px;top:58px;font-size:7.41px;color:#444;transform:scaleX(0.950);transform-origin:0 0;">Insert</div>
<svg style="position:absolute;left:721.8px;top:69.5px;overflow:visible" width="3" height="2" viewBox="0 0 3 2"><path d="M-0.3 0 H3.1 L1.4 1.9 Z" fill="#555"/></svg>
<svg style="position:absolute;left:740.5px;top:36px;overflow:visible" width="20" height="17" viewBox="0 0 20 17"><rect x="0.6" y="0.5" width="9.2" height="2.8" fill="#fff" stroke="#888" stroke-width="0.7"/><path d="M5.199999999999999 0.5 V3.3" stroke="#888" stroke-width="0.7"/><rect x="5" y="5" width="4" height="3.5" fill="#C9DAF0" stroke="#7F9FC8" stroke-width="0.7"/><path d="M9.5 3.5 L17.5 10.5 M17.5 3.5 L9.5 10.5" stroke="#E24A33" stroke-width="1.1"/><rect x="0.6" y="10" width="9.2" height="6.4" fill="#fff" stroke="#888" stroke-width="0.7"/><path d="M5.199999999999999 10 V16.4" stroke="#888" stroke-width="0.7"/><path d="M0.6 13.2 H9.799999999999999" stroke="#888" stroke-width="0.7"/></svg>
<div class="t" style="left:740.3px;top:58px;font-size:7.41px;color:#444;transform:scaleX(0.929);transform-origin:0 0;">Delete</div>
<svg style="position:absolute;left:748.8px;top:69.5px;overflow:visible" width="3" height="2" viewBox="0 0 3 2"><path d="M-0.3 0 H3.1 L1.4 1.9 Z" fill="#555"/></svg>
<div class="t" style="left:746.1px;top:78px;font-size:7.27px;color:#777;transform:scaleX(0.835);transform-origin:0 0;">Cells</div>
<div style="position:absolute;left:766.4px;top:30px;width:0.9px;height:464px;background:#E2E2E2;"></div>
<div style="position:absolute;left:0px;top:0px;width:768px;height:16px;background:#fff;"></div>
<div style="position:absolute;left:0px;top:0px;width:768px;height:1.2px;background:#A3B3A8;"></div>
<div class="t" style="left:577.1px;top:4px;font-size:8.43px;color:#444;transform:scaleX(0.810);transform-origin:0 0;">Book1 - IG Excel</div>
<div style="position:absolute;left:5px;top:4.3px;width:7px;height:0.7px;background:#C8C8C8;"></div>
<div style="position:absolute;left:4.9px;top:7.8px;width:8.7px;height:4.3px;background:#1F7044;border-radius:1px;"></div>
<div style="position:absolute;left:8.2px;top:9.3px;width:2px;height:1.3px;background:#E8F2EA;"></div>
<svg style="position:absolute;left:30.8px;top:3.6px;overflow:visible" width="9" height="9" viewBox="0 0 9 9"><path d="M0.6 0.6 H8 V8 H0.6 Z" fill="#fff" stroke="#7B3FB0" stroke-width="1.2"/>
<rect x="0.6" y="3.4" width="7.4" height="1.3" fill="#7B3FB0"/>
<rect x="2.5" y="5.8" width="3.6" height="2.2" fill="#7B3FB0"/></svg>
<svg style="position:absolute;left:45px;top:5.5px;overflow:visible" width="7" height="5" viewBox="0 0 7 5"><path d="M0.5 2.2 L3 0 V1.4 C5 1.4 6.5 2.5 6.5 4.6 C5.6 3.2 4.5 3 3 3 V4.4 Z" fill="#2A66B0"/></svg>
<svg style="position:absolute;left:57.6px;top:7.3px;overflow:visible" width="4" height="2" viewBox="0 0 4 2"><path d="M0 0 H3.5 L1.75 1.4 Z" fill="#555"/></svg>
<svg style="position:absolute;left:65.8px;top:5.8px;overflow:visible" width="7" height="5" viewBox="0 0 7 5"><path d="M6.5 2.2 L4 0 V1.4 C2 1.4 0.5 2.5 0.5 4.6 C1.4 3.2 2.5 3 4 3 V4.4 Z" fill="#BDBDBD"/></svg>
<svg style="position:absolute;left:80.3px;top:7.5px;overflow:visible" width="3" height="2" viewBox="0 0 3 2"><path d="M0 0 H2.6 L1.3 1.2 Z" fill="#BDBDBD"/></svg>
<svg style="position:absolute;left:88px;top:6px;overflow:visible" width="3" height="4" viewBox="0 0 3 4"><rect x="0" y="0" width="2.6" height="0.8" fill="#555"/><path d="M0 2 H2.6 L1.3 3.6 Z" fill="#555"/></svg>
<div style="position:absolute;left:74px;top:29.6px;width:694px;height:0.8px;background:#D8D8D8;"></div>
<div style="position:absolute;left:1px;top:15.9px;width:33px;height:14.2px;background:#217346;"></div>
<div class="t" style="left:11.3px;top:20px;font-size:9.01px;color:#fff;font-weight:bold;-webkit-text-stroke:0;transform:scaleX(0.661);transform-origin:0 0;">FILE</div>
<div style="position:absolute;left:36px;top:16.4px;width:38.2px;height:14.2px;box-sizing:border-box;border:1px solid #D2D2D2;border-bottom:none;background:#fff;"></div>
<div class="t" style="left:45px;top:20px;font-size:9.16px;color:#4A8262;transform:scaleX(0.728);transform-origin:0 0;">HOME</div>
<div class="t" style="left:83.75px;top:20px;font-size:9.16px;color:#444;transform:scaleX(0.763);transform-origin:0 0;">DATA</div>
<div class="t" style="left:118px;top:20px;font-size:9.16px;color:#444;transform:scaleX(0.748);transform-origin:0 0;">VIEW</div>
<div style="position:absolute;left:0px;top:0px;width:1.2px;height:494px;background:#93A399;"></div>
</body></html>
